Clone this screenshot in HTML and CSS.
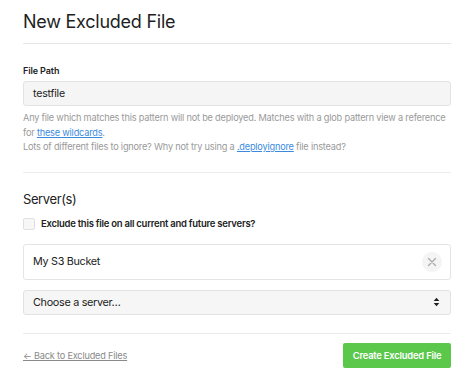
FILE: index.html
```html
<!DOCTYPE html>
<html>
<head>
<meta charset="utf-8">
<link rel="stylesheet" href="styles.css">
</head>
<body>
<div class="page">
  <header class="page-header">
    <h1 class="title">New Excluded File</h1>
  </header>

  <section class="field">
    <label class="field-label">File Path</label>
    <div class="text-input">testfile</div>
    <p class="help">Any file which matches this pattern will not be deployed. Matches with a glob pattern view a reference for <a class="link" href="#">these wildcards</a>.</p>
    <p class="help">Lots of different files to ignore? Why not try using a <a class="link" href="#">.deployignore</a> file instead?</p>
  </section>

  <hr class="divider">

  <section class="servers">
    <h2 class="subtitle">Server(s)</h2>
    <div class="check-row">
      <span class="checkbox"></span>
      <span class="check-label">Exclude this file on all current and future servers?</span>
    </div>
    <div class="server-item">
      <span>My S3 Bucket</span>
      <span class="remove">
        <svg width="10" height="10" viewBox="0 0 10 10"><path d="M1.5 1.5L8.5 8.5M8.5 1.5L1.5 8.5" stroke="#a8a8a8" stroke-width="1.2" fill="none" stroke-linecap="round"/></svg>
      </span>
    </div>
    <div class="select">
      <span>Choose a server…</span>
      <svg class="arrows" width="7" height="10" viewBox="0 0 7 10"><path d="M3.5 0.8L6.3 4H0.7Z M3.5 9.2L6.3 6H0.7Z" fill="#222"/></svg>
    </div>
  </section>

  <hr class="divider divider-bottom">

  <footer class="actions">
    <a class="back" href="#">← Back to Excluded Files</a>
    <button class="btn-primary">Create Excluded File</button>
  </footer>
</div>
</body>
</html>
```

FILE: styles.css
```css
* { box-sizing: border-box; }
html, body { margin: 0; padding: 0; background: #fff; }
body {
  font-family: Inter, "Noto Sans", "Liberation Sans", sans-serif;
  color: #222;
}
.page {
  width: 428px;
  margin-left: 23px;
}
.page-header {
  padding-top: 10px;
  padding-bottom: 9px;
  border-bottom: 1px solid #e6e6e6;
}
.title {
  margin: 0;
  font-size: 18px;
  line-height: 24px;
  font-weight: 400;
  color: #1e1e1e;
  letter-spacing: -0.25px;
}
.field {
  padding-top: 20px;
}
.field-label {
  display: block;
  font-size: 9px;
  line-height: 14px;
  font-weight: 600;
  letter-spacing: -0.1px;
  color: #222;
}
.text-input {
  margin-top: 3px;
  height: 25px;
  padding: 0 9px;
  display: flex;
  align-items: center;
  background: #f5f5f5;
  border: 1px solid #e3e3e3;
  border-radius: 3px;
  font-size: 10.6px;
  letter-spacing: -0.2px;
  color: #222;
}
.help {
  margin: 0;
  font-size: 9.2px;
  line-height: 14.5px;
  letter-spacing: -0.2px;
  color: #9a9a9a;
}
.text-input + .help { margin-top: 5px; }
.link {
  color: #3a8be0;
  text-decoration: underline;
}
.divider {
  border: 0;
  border-top: 1px solid #ececec;
  margin: 17px 0 0 0;
  height: 0;
}
.subtitle {
  margin: 17px 0 0 0;
  font-size: 13px;
  line-height: 18px;
  font-weight: 400;
  letter-spacing: -0.4px;
  color: #222;
}
.check-row {
  margin-top: 10px;
  display: flex;
  align-items: center;
  gap: 6px;
}
.checkbox {
  width: 12px;
  height: 12px;
  border: 1px solid #e0e0e0;
  background: #f7f7f7;
  border-radius: 2px;
}
.check-label {
  font-size: 9.5px;
  font-weight: 600;
  letter-spacing: -0.25px;
  color: #222;
}
.server-item {
  margin-top: 14px;
  height: 36px;
  border: 1px solid #e4e4e4;
  border-radius: 3px;
  display: flex;
  align-items: center;
  justify-content: space-between;
  padding: 0 8px 0 9px;
  font-size: 10.8px;
  letter-spacing: -0.3px;
  color: #222;
}
.remove {
  width: 20px;
  height: 20px;
  border-radius: 50%;
  background: #f4f4f4;
  display: flex;
  align-items: center;
  justify-content: center;
}
.select {
  margin-top: 10px;
  height: 25px;
  border: 1px solid #e2e2e2;
  border-radius: 3px;
  background: #f6f6f6;
  display: flex;
  align-items: center;
  justify-content: space-between;
  padding: 0 10px 0 9px;
  font-size: 10.8px;
  letter-spacing: -0.3px;
  color: #222;
}
.divider-bottom { margin-top: 18px; }
.actions {
  margin-top: 9px;
  display: flex;
  align-items: center;
  justify-content: space-between;
}
.back {
  font-size: 9.2px;
  letter-spacing: -0.2px;
  color: #8a8a8a;
  text-decoration: underline;
}
.btn-primary {
  height: 25px;
  width: 108px;
  padding: 0;
  border: 0;
  border-radius: 2px;
  background: #5bc84c;
  color: #fff;
  font-family: inherit;
  font-size: 9.4px;
  font-weight: 600;
  letter-spacing: -0.2px;
  white-space: nowrap;
  text-align: center;
}
```
